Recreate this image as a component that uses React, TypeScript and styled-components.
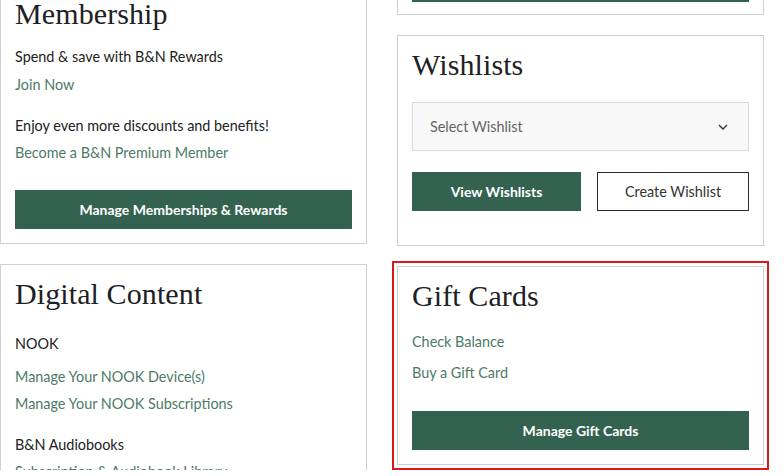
import styled, { createGlobalStyle } from "styled-components";

const GlobalStyle = createGlobalStyle`
  html, body {
    margin: 0;
    padding: 0;
    background: #fff;
  }
  body {
    font-family: Lato, "Liberation Sans", Arial, sans-serif;
    color: #222;
  }
`;

const Viewport = styled.div`
  width: 784px;
  height: 470px;
  overflow: hidden;
  background: #fff;
`;

const Columns = styled.div`
  display: flex;
  align-items: flex-start;
  gap: 30px;
`;

const Column = styled.div<{ $offset: number }>`
  width: 367px;
  display: flex;
  flex-direction: column;
  gap: 20px;
  margin-top: ${(p) => p.$offset}px;
`;

const Card = styled.section<{ $highlight?: boolean; $bottom?: number }>`
  box-sizing: border-box;
  width: 367px;
  border: 1px solid #cfcfcf;
  background: #fff;
  padding: 13px 14px ${(p) => p.$bottom ?? 14}px;
  outline: ${(p) => (p.$highlight ? "2px solid #d9191c" : "none")};
  outline-offset: 3px;
`;

const Heading = styled.h2`
  margin: 0;
  font-family: "Liberation Serif", "DejaVu Serif", serif;
  font-weight: 400;
  font-size: 30px;
  line-height: 32px;
  color: #1d2125;
  letter-spacing: 0.1px;
`;

const Line = styled.div<{ $gap: number; $link?: boolean }>`
  margin-top: ${(p) => p.$gap}px;
  font-size: 14.4px;
  line-height: 20px;
  color: ${(p) => (p.$link ? "#4d7b66" : "#222")};
  cursor: ${(p) => (p.$link ? "pointer" : "default")};
`;

const PrimaryButton = styled.button<{ $gap?: number; $width?: number }>`
  display: block;
  box-sizing: border-box;
  width: ${(p) => (p.$width ? `${p.$width}px` : "100%")};
  flex: none;
  margin-top: ${(p) => p.$gap ?? 0}px;
  height: 39px;
  border: none;
  background: #346250;
  color: #fff;
  font-family: Lato, "Liberation Sans", Arial, sans-serif;
  font-weight: 700;
  font-size: 14px;
  cursor: pointer;
`;

const OutlineButton = styled.button`
  flex: 1;
  box-sizing: border-box;
  height: 39px;
  border: 1px solid #2b2b2b;
  background: #fff;
  color: #333;
  font-family: Lato, "Liberation Sans", Arial, sans-serif;
  font-size: 14.4px;
  cursor: pointer;
`;

const Select = styled.div`
  box-sizing: border-box;
  margin-top: 21px;
  height: 49px;
  border: 1px solid #dadada;
  background: #f8f8f8;
  display: flex;
  align-items: center;
  justify-content: space-between;
  padding: 0 20px 0 17px;
  font-size: 14.4px;
  color: #666;
  cursor: pointer;
`;

const ButtonRow = styled.div`
  display: flex;
  gap: 16px;
  margin-top: 21px;
  margin-bottom: 20px;
`;

const Chevron = () => (
  <svg width="10" height="6" viewBox="0 0 10 6" fill="none">
    <path d="M1 1l4 4 4-4" stroke="#333" strokeWidth="1.4" />
  </svg>
);

const App = () => {
  return (
    <>
      <GlobalStyle />
      <Viewport>
        <Columns>
          <Column $offset={-16}>
            <Card>
              <Heading>Membership</Heading>
              <Line $gap={17}>Spend &amp; save with B&amp;N Rewards</Line>
              <Line $gap={8} $link>Join Now</Line>
              <Line $gap={21}>Enjoy even more discounts and benefits!</Line>
              <Line $gap={7} $link>Become a B&amp;N Premium Member</Line>
              <PrimaryButton $gap={27}>Manage Memberships &amp; Rewards</PrimaryButton>
            </Card>
            <Card>
              <Heading>Digital Content</Heading>
              <Line $gap={24}>NOOK</Line>
              <Line $gap={13} $link>Manage Your NOOK Device(s)</Line>
              <Line $gap={7} $link>Manage Your NOOK Subscriptions</Line>
              <Line $gap={21}>B&amp;N Audiobooks</Line>
              <Line $gap={7} $link>Subscription &amp; Audiobook Library</Line>
            </Card>
          </Column>
          <Column $offset={-184}>
            <Card $bottom={12}>
              <Heading>Address Book</Heading>
              <Line $gap={20} $link>Add a New Address</Line>
              <Line $gap={11} $link>Set Default Address</Line>
              <PrimaryButton $gap={30}>Manage Address Book</PrimaryButton>
            </Card>
            <Card>
              <Heading>Wishlists</Heading>
              <Select>
                <span>Select Wishlist</span>
                <Chevron />
              </Select>
              <ButtonRow>
                <PrimaryButton $width={169}>View Wishlists</PrimaryButton>
                <OutlineButton>Create Wishlist</OutlineButton>
              </ButtonRow>
            </Card>
            <Card $highlight>
              <Heading>Gift Cards</Heading>
              <Line $gap={20} $link>Check Balance</Line>
              <Line $gap={11} $link>Buy a Gift Card</Line>
              <PrimaryButton $gap={28}>Manage Gift Cards</PrimaryButton>
            </Card>
          </Column>
        </Columns>
      </Viewport>
    </>
  );
};

export default App;
